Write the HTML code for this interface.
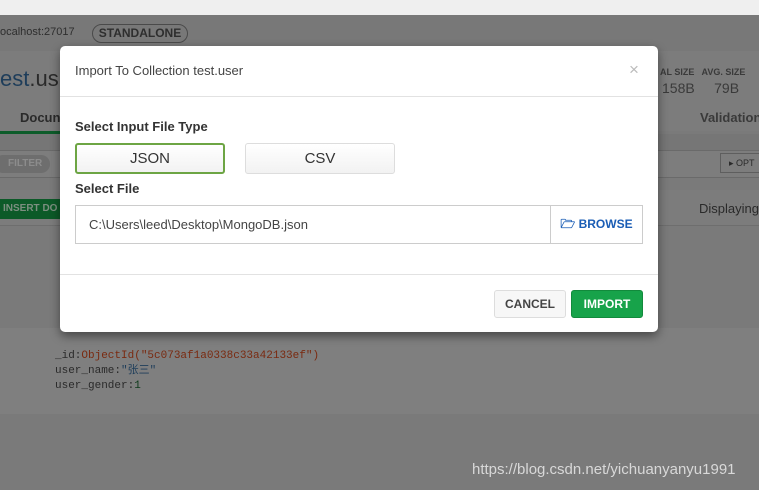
<!DOCTYPE html>
<html><head><meta charset="utf-8"><style>
*{box-sizing:border-box;margin:0;padding:0}
html,body{background:#7a7a7a}
body{width:759px;height:490px;overflow:hidden;font-family:"Liberation Sans",Arial,sans-serif;position:relative}
.abs{position:absolute}
.mono{font-family:"Liberation Mono","Noto Sans CJK SC",monospace;font-size:11px;line-height:14px;height:14px;color:#2a2a2a;white-space:nowrap}
</style></head><body>
<div class="abs" style="left:0;top:0;width:759px;height:15px;background:#efefef"></div>
<div class="abs" style="left:0;top:15px;width:759px;height:475px;background:#7a7a7a"></div>
<div class="abs" style="left:0;top:15px;width:759px;height:36px;background:#787878"></div>
<div class="abs" style="left:0;top:26px;font-size:11px;color:#2e2e2e">ocalhost:27017</div>
<div class="abs" style="left:92px;top:24px;width:96px;height:19px;border:1px solid #4a4a4a;border-radius:10px;font-size:12px;font-weight:bold;color:#2e2e2e;text-align:center;line-height:17px">STANDALONE</div>
<div class="abs" style="left:0;top:51px;width:759px;height:80px;background:#7c7c7c"></div>
<div class="abs" style="left:0;top:66px;font-size:22px;color:#2a2a2a"><span style="color:#1e3d5a">est</span>.us</div>
<div class="abs" style="left:20px;top:110px;font-size:13px;font-weight:bold;color:#2a2a2a">Docun</div>
<div class="abs" style="left:0;top:131px;width:60px;height:3px;background:#0d5c2a"></div>
<div class="abs" style="left:0;top:134px;width:759px;height:16px;background:#767676"></div>
<div class="abs" style="left:660px;top:67px;font-size:9px;font-weight:bold;color:#3a3a3a;white-space:nowrap">AL SIZE &nbsp; AVG. SIZE</div>
<div class="abs" style="left:662px;top:80px;font-size:14px;color:#3a3a3a;white-space:nowrap">158B &nbsp;&nbsp;&nbsp;&nbsp;79B</div>
<div class="abs" style="left:700px;top:110px;font-size:13px;font-weight:bold;color:#3a3a3a">Validation</div>
<div class="abs" style="left:0;top:150px;width:759px;height:28px;background:#7d7d7d;border-top:1px solid #6a6a6a;border-bottom:1px solid #6a6a6a"></div>
<div class="abs" style="left:-6px;top:155px;width:56px;height:18px;border-radius:9px;background:#6e6e6e;font-size:10px;font-weight:bold;color:#8c8c8c;line-height:18px;padding-left:14px">FILTER</div>
<div class="abs" style="left:720px;top:153px;width:50px;height:20px;border:1px solid #5e5e5e;font-size:9px;color:#2a2a2a;line-height:18px;padding-left:8px;white-space:nowrap">▸ OPT</div>
<div class="abs" style="left:0;top:190px;width:759px;height:36px;background:#7c7c7c;border-bottom:1px solid #6e6e6e"></div>
<div class="abs" style="left:0;top:199px;width:62px;height:20px;background:#0c5a28;font-size:10px;font-weight:bold;color:#7c8f80;line-height:20px;padding-left:3px;white-space:nowrap;overflow:hidden">INSERT DO</div>
<div class="abs" style="left:699px;top:201px;font-size:13px;color:#2a2a2a">Displaying</div>
<div class="abs" style="left:0;top:328px;width:759px;height:86px;background:#7f7f7f"></div>
<div class="abs mono" style="left:55px;top:349px">_id:<span style="color:#7a2a10">ObjectId("5c073af1a0338c33a42133ef")</span></div>
<div class="abs mono" style="left:55px;top:364px">user_name:<span style="color:#1e3d5a">"张三"</span></div>
<div class="abs mono" style="left:55px;top:379px">user_gender:<span style="color:#0d3a1a">1</span></div>
<div class="abs" style="left:472px;top:461px;font-size:15px;color:#d8d8d8;white-space:nowrap">https://blog.csdn.net/yichuanyanyu1991</div>

<div class="abs" style="left:60px;top:46px;width:598px;height:286px;background:#fff;border-radius:5px;box-shadow:0 4px 10px rgba(0,0,0,.45)">
 <div class="abs" style="left:15px;top:17px;font-size:13px;color:#444">Import To Collection test.user</div>
 <div class="abs" style="left:569px;top:14px;font-size:17px;color:#bbb">×</div>
 <div class="abs" style="left:0;top:50px;width:598px;height:1px;background:#e2e2e2"></div>
 <div class="abs" style="left:15px;top:73px;font-size:13px;font-weight:bold;color:#333">Select Input File Type</div>
 <div class="abs" style="left:15px;top:97px;width:150px;height:31px;border:2px solid #6da544;border-radius:3px;background:linear-gradient(#fff,#f2f2f2);font-size:15px;color:#333;text-align:center;line-height:27px">JSON</div>
 <div class="abs" style="left:185px;top:97px;width:150px;height:31px;border:1px solid #ddd;border-radius:3px;background:linear-gradient(#fff,#f2f2f2);font-size:15px;color:#333;text-align:center;line-height:29px">CSV</div>
 <div class="abs" style="left:15px;top:135px;font-size:13px;font-weight:bold;color:#333">Select File</div>
 <div class="abs" style="left:15px;top:159px;width:476px;height:39px;border:1px solid #ccc;font-size:13px;color:#444;line-height:37px;padding-left:13px">C:\Users\leed\Desktop\MongoDB.json</div>
 <div class="abs" style="left:490px;top:159px;width:93px;height:39px;border:1px solid #ccc;font-size:12px;font-weight:bold;color:#1a5db5;line-height:37px;text-align:center;white-space:nowrap">🗁 BROWSE</div>
 <div class="abs" style="left:0;top:228px;width:598px;height:1px;background:#e2e2e2"></div>
 <div class="abs" style="left:434px;top:244px;width:72px;height:28px;border:1px solid #ddd;border-radius:3px;background:#f7f7f7;font-size:12px;font-weight:bold;color:#444;text-align:center;line-height:26px">CANCEL</div>
 <div class="abs" style="left:511px;top:244px;width:72px;height:28px;border:1px solid #128a3c;border-radius:3px;background:#17a34a;font-size:12px;font-weight:bold;color:#fff;text-align:center;line-height:26px">IMPORT</div>
</div>
</body></html>
